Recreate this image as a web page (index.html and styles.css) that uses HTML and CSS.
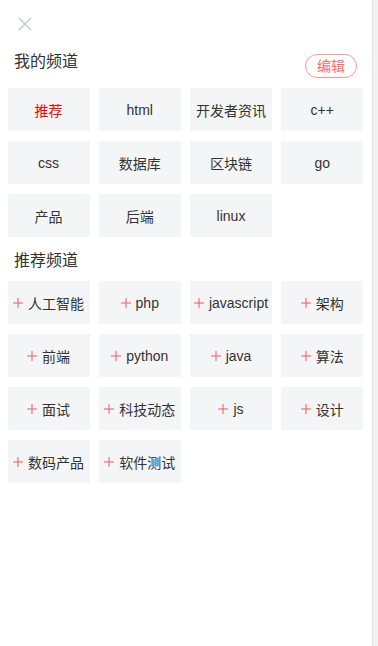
FILE: index.html
```html
<!DOCTYPE html>
<html lang="zh">
<head>
<meta charset="utf-8">
<link rel="stylesheet" href="styles.css">
</head>
<body>
<div class="page">
  <div class="panel">
    <div class="close">
      <svg width="14" height="14" viewBox="0 0 14 14"><path d="M1 1 L13 13 M13 1 L1 13" stroke="#c9cdd4" stroke-width="1.6" fill="none"/></svg>
    </div>
    <div class="head">
      <span class="title">我的频道</span>
      <span class="edit">编辑</span>
    </div>
    <div class="grid mine">
      <div class="cell active">推荐</div>
      <div class="cell">html</div>
      <div class="cell">开发者资讯</div>
      <div class="cell">c++</div>
      <div class="cell">css</div>
      <div class="cell">数据库</div>
      <div class="cell">区块链</div>
      <div class="cell">go</div>
      <div class="cell">产品</div>
      <div class="cell">后端</div>
      <div class="cell">linux</div>
    </div>
    <div class="head2"><span class="title">推荐频道</span></div>
    <div class="grid rec">
      <div class="cell"><svg class="plus" viewBox="0 0 10 10"><path d="M5 0 V10 M0 5 H10"/></svg>人工智能</div>
      <div class="cell"><svg class="plus" viewBox="0 0 10 10"><path d="M5 0 V10 M0 5 H10"/></svg>php</div>
      <div class="cell"><svg class="plus" viewBox="0 0 10 10"><path d="M5 0 V10 M0 5 H10"/></svg>javascript</div>
      <div class="cell"><svg class="plus" viewBox="0 0 10 10"><path d="M5 0 V10 M0 5 H10"/></svg>架构</div>
      <div class="cell"><svg class="plus" viewBox="0 0 10 10"><path d="M5 0 V10 M0 5 H10"/></svg>前端</div>
      <div class="cell"><svg class="plus" viewBox="0 0 10 10"><path d="M5 0 V10 M0 5 H10"/></svg>python</div>
      <div class="cell"><svg class="plus" viewBox="0 0 10 10"><path d="M5 0 V10 M0 5 H10"/></svg>java</div>
      <div class="cell"><svg class="plus" viewBox="0 0 10 10"><path d="M5 0 V10 M0 5 H10"/></svg>算法</div>
      <div class="cell"><svg class="plus" viewBox="0 0 10 10"><path d="M5 0 V10 M0 5 H10"/></svg>面试</div>
      <div class="cell"><svg class="plus" viewBox="0 0 10 10"><path d="M5 0 V10 M0 5 H10"/></svg>科技动态</div>
      <div class="cell"><svg class="plus" viewBox="0 0 10 10"><path d="M5 0 V10 M0 5 H10"/></svg>js</div>
      <div class="cell"><svg class="plus" viewBox="0 0 10 10"><path d="M5 0 V10 M0 5 H10"/></svg>设计</div>
      <div class="cell"><svg class="plus" viewBox="0 0 10 10"><path d="M5 0 V10 M0 5 H10"/></svg>数码产品</div>
      <div class="cell"><svg class="plus" viewBox="0 0 10 10"><path d="M5 0 V10 M0 5 H10"/></svg>软件测试</div>
    </div>
  </div>
  <div class="side"></div>
</div>
</body>
</html>
```
FILE: styles.css
```css
html, body {
  margin: 0;
  padding: 0;
  background: #fff;
}
body {
  font-family: "Liberation Sans", "Noto Sans CJK SC", sans-serif;
  color: #333;
}
.page {
  display: flex;
  width: 378px;
  height: 646px;
}
.panel {
  width: 372px;
  background: #fff;
}
.side {
  width: 5px;
  background: #f2f2f2;
  border-left: 1px solid #e6e6e6;
}
.close {
  width: 14px;
  height: 14px;
  margin: 17px 0 0 18px;
}
.close svg {
  display: block;
}
.head {
  margin-top: 23px;
  height: 24px;
  padding: 0 15px 0 14px;
  display: flex;
  justify-content: space-between;
  align-items: flex-start;
}
.title {
  font-size: 16px;
  line-height: 16px;
  color: #333;
}
.edit {
  box-sizing: border-box;
  width: 52px;
  height: 24px;
  border: 1px solid #f89a9a;
  border-radius: 12px;
  color: #f56c6c;
  font-size: 14px;
  line-height: 22px;
  text-align: center;
}
.grid {
  display: grid;
  grid-template-columns: repeat(4, 82px);
  column-gap: 9.25px;
  row-gap: 10px;
  grid-auto-rows: 43px;
  padding-left: 7.5px;
}
.mine {
  margin-top: 10px;
}
.head2 {
  margin-top: 15px;
  padding-left: 14px;
  height: 16px;
}
.rec {
  margin-top: 13px;
}
.cell {
  background: #f4f5f6;
  display: flex;
  align-items: center;
  justify-content: center;
  font-size: 14px;
  color: #333;
  white-space: nowrap;
}
.cell.active {
  color: #f00;
}
.plus {
  width: 10px;
  height: 10px;
  margin-right: 5px;
  stroke: #f5585e;
  stroke-width: 1;
  fill: none;
  flex: none;
}
```
